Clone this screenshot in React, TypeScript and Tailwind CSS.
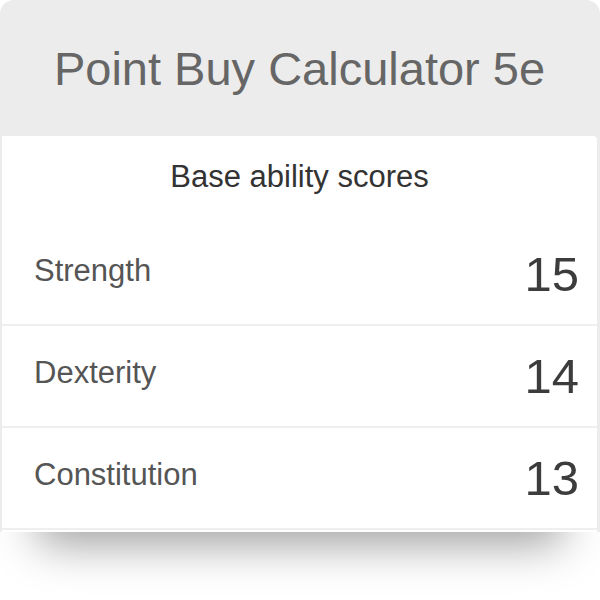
const stats = [
  { name: "Strength", value: 15 },
  { name: "Dexterity", value: 14 },
  { name: "Constitution", value: 13 },
];

export default function App() {
  return (
    <div
      className="w-[600px] h-[600px] bg-white overflow-hidden flex flex-col"
      style={{ fontFamily: '"Liberation Sans", Arial, sans-serif' }}
    >
      <div className="bg-[#ececec] rounded-t-[14px] pl-[2px] pr-[3px]">
        <div className="h-[136px] flex items-center justify-center">
          <h1 className="text-[47px] leading-none text-[#666666]">Point Buy Calculator 5e</h1>
        </div>
        <div className="bg-white rounded-tr-[4px]">
          <div className="h-[88px] pb-[7px] flex items-center justify-center">
            <h2 className="text-[31px] leading-none text-[#333333]">Base ability scores</h2>
          </div>
          {stats.map((s) => (
            <div
              key={s.name}
              className="h-[102px] flex items-center justify-between pl-[32px] pr-[18px] border-b-2 border-[#efefef]"
            >
              <span className="text-[31px] leading-none text-[#555555] mb-[7px]">{s.name}</span>
              <span className="text-[49px] leading-none text-[#3c3c3c]">{s.value}</span>
            </div>
          ))}
          <div className="h-[2px]" />
        </div>
      </div>
      <div className="relative h-[68px] overflow-hidden bg-white">
        <div className="absolute left-[50px] right-[50px] bottom-full h-[40px] shadow-[0_0_45px_12px_rgba(0,0,0,0.38)]" />
      </div>
    </div>
  );
}
